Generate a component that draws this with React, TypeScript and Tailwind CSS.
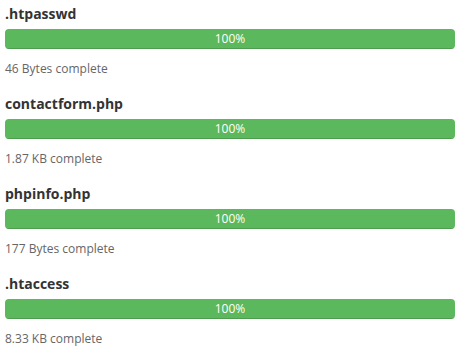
const files = [
  { name: '.htpasswd', size: '46 Bytes' },
  { name: 'contactform.php', size: '1.87 KB' },
  { name: 'phpinfo.php', size: '177 Bytes' },
  { name: '.htaccess', size: '8.33 KB' },
];

function UploadItem({ name, size }: { name: string; size: string }) {
  return (
    <div className="mb-[17px]">
      <div className="text-[14px] leading-[20px] font-bold text-[#333]">{name}</div>
      <div className="mt-[5px] h-[20px] w-[450px] rounded-[4px] bg-[#f5f5f5] overflow-hidden">
        <div
          className="h-full bg-[#5cb85c] text-white text-[12px] leading-[20px] text-center shadow-[inset_0_-1px_0_rgba(0,0,0,0.15)]"
          style={{ width: '100%' }}
        >
          100%
        </div>
      </div>
      <div className="mt-[11px] text-[12px] leading-[17px] text-[#666]">{size} complete</div>
    </div>
  );
}

export default function App() {
  return (
    <div className="w-[469px] h-[358px] bg-white pt-[4px] pl-[5px]" style={{ fontFamily: '"Open Sans", sans-serif' }}>
      {files.map((f) => (
        <UploadItem key={f.name} name={f.name} size={f.size} />
      ))}
    </div>
  );
}
